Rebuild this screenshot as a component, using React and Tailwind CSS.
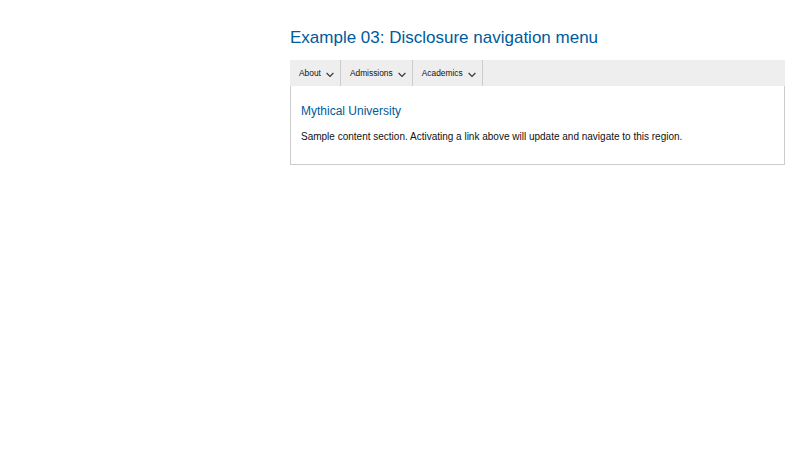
import React from "react";

function Chevron() {
  return (
    <svg width="8" height="6" viewBox="0 0 8 6" className="ml-[5px] mt-[3px]" aria-hidden="true">
      <path d="M0.6 1 L4 4.5 L7.4 1" fill="none" stroke="#333" strokeWidth="1.1" />
    </svg>
  );
}

const items = ["About", "Admissions", "Academics"];

export default function App() {
  return (
    <div className="min-h-[450px] bg-white font-['Liberation_Sans',Arial,sans-serif]">
      <div className="ml-[290px] w-[495px] pt-[28px]">
        <h1 className="text-[17px] leading-[20px] text-[#005a9c]">
          Example 03: Disclosure navigation menu
        </h1>
        <nav className="mt-[12px] flex h-[26px] bg-[#eeeeee]">
          {items.map((label) => (
            <button
              key={label}
              className="flex items-center border-r border-[#cccccc] pl-[9px] pr-[6px] pt-[1px] text-[8.4px] text-[#111]"
            >
              {label}
              <Chevron />
            </button>
          ))}
        </nav>
        <main className="h-[79px] border border-t-0 border-[#cccccc] px-[10px] pt-[18px]">
          <h2 className="text-[12px] leading-[15px] text-[#005a9c]">Mythical University</h2>
          <p className="mt-[12px] text-[10px] leading-[12px] text-[#111]">
            Sample content section. Activating a link above will update and navigate to this region.
          </p>
        </main>
      </div>
    </div>
  );
}
